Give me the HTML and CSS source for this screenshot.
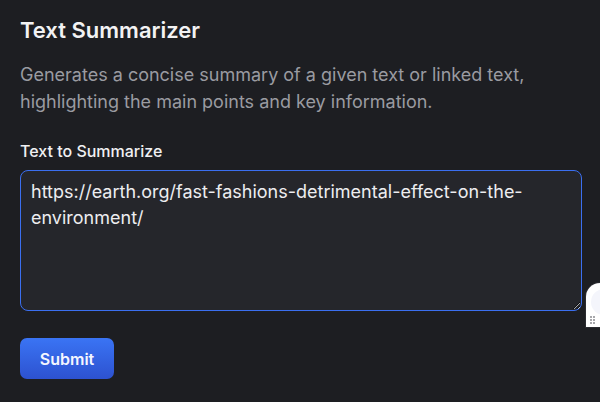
FILE: index.html
```html
<!DOCTYPE html>
<html>
<head>
<meta charset="utf-8">
<link rel="stylesheet" href="styles.css">
</head>
<body>
<div class="page">
  <h1 class="title">Text Summarizer</h1>
  <p class="desc">Generates a concise summary of a given text or linked text, highlighting the main points and key information.</p>
  <label class="label" for="t">Text to Summarize</label>
  <textarea id="t" class="input">https://earth.org/fast-fashions-detrimental-effect-on-the-environment/</textarea>
  <div class="actions"><button class="submit">Submit</button></div>
</div>
<div class="widget">
  <div class="widget-circle"></div>
  <div class="widget-dots"><i></i><i></i><i></i><i></i><i></i><i></i></div>
</div>
</body>
</html>
```
FILE: styles.css
```css
html, body { margin: 0; padding: 0; background: #1d1e22; height: 100%; overflow: hidden; }
body { font-family: Inter, "Noto Sans", sans-serif; color: #ececee; }
.page { padding: 15px 18px 0 20px; display: flex; flex-direction: column; align-items: flex-start; }
.title { margin: 0; font-size: 22px; line-height: 30px; font-weight: 600; color: #f2f2f3; }
.desc { margin: 16px 0 0; font-size: 18px; line-height: 27px; color: #9a9ba1; max-width: 540px; }
.label { margin-top: 25px; font-size: 16px; line-height: 22px; font-weight: 500; color: #f0f0f2; }
.input { margin-top: 8px; box-sizing: border-box; width: 562px; height: 141px; background: #25262b; border: 1px solid #3b6ff0; border-radius: 8px; padding: 8px 10px; font-family: Inter, "Noto Sans", sans-serif; font-size: 18px; line-height: 26px; color: #ededf0; outline: none; resize: vertical; }
.actions { margin-top: 27px; }
.submit { width: 94px; height: 41px; border: 0; border-radius: 7px; background: linear-gradient(#3a74f4, #2d52d0); color: #f4f6ff; font-family: Inter, "Noto Sans", sans-serif; font-size: 16px; font-weight: 600; }
.widget { position: absolute; left: 586px; top: 283px; width: 30px; height: 44px; background: #fff; border-radius: 14px 0 0 0; box-shadow: 0 0 0 1px #2a2b30; overflow: hidden; }
.widget-circle { position: absolute; left: 5px; top: 6px; width: 26px; height: 26px; border-radius: 50%; background: #f4f5fb; }
.widget-dots { position: absolute; left: 4px; top: 33px; width: 6px; display: grid; grid-template-columns: 2px 2px; gap: 1px; }
.widget-dots i { width: 2px; height: 2px; background: #a8a8ac; display: block; }
```
